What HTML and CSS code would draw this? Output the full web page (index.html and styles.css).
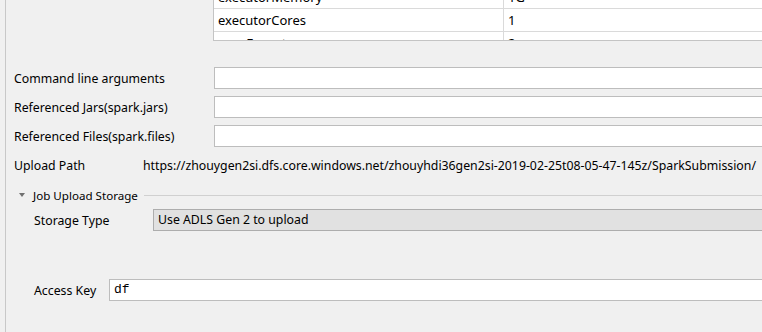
FILE: index.html
```html
<!DOCTYPE html>
<html>
<head>
<meta charset="utf-8">
<link rel="stylesheet" href="styles.css">
</head>
<body>
<div class="panel">
  <div class="params">
    <table class="ptable">
      <tr><td class="k">executorMemory</td><td class="v">1G</td></tr>
      <tr><td class="k">executorCores</td><td class="v">1</td></tr>
      <tr><td class="k">numExecutors</td><td class="v">2</td></tr>
    </table>
  </div>
  <div class="form">
    <div class="row"><span class="lbl lbl-main">Command line arguments</span><div class="field"></div></div>
    <div class="row"><span class="lbl lbl-main">Referenced Jars(spark.jars)</span><div class="field"></div></div>
    <div class="row"><span class="lbl lbl-main">Referenced Files(spark.files)</span><div class="field"></div></div>
    <div class="row row-upload"><span class="lbl lbl-upload">Upload Path</span><span class="url">https://zhouygen2si.dfs.core.windows.net/zhouyhdi36gen2si-2019-02-25t08-05-47-145z/SparkSubmission/</span></div>
    <div class="group">
      <div class="group-title"><span class="tri"></span><span class="gt-text">Job Upload Storage</span><span class="sep"></span></div>
      <div class="row"><span class="lbl lbl-type">Storage Type</span><div class="combo">Use ADLS Gen 2 to upload</div></div>
      <div class="row row-key"><span class="lbl lbl-key">Access Key</span><div class="field mono">df</div></div>
    </div>
  </div>
</div>
</body>
</html>
```
FILE: styles.css
```css
html, body {
  margin: 0;
  padding: 0;
  background: #f0f0f0;
  overflow: hidden;
  width: 762px;
  height: 332px;
}
body {
  font-family: "Noto Sans", "Open Sans", sans-serif;
  font-size: 12.3px;
  color: #000;
}
.panel {
  margin-left: 5px;
  border-left: 1px solid #c8c8c8;
  height: 332px;
  width: 900px;
}
.params {
  margin-left: 207px;
  height: 40px;
  overflow: hidden;
  border-bottom: 1px solid #c4c4c4;
  border-left: 1px solid #c4c4c4;
  background: #fff;
}
.ptable {
  border-collapse: collapse;
  margin-top: -14px;
  width: 700px;
  font-size: 13px;
}
.ptable td {
  height: 22px;
  padding: 0 0 0 4px;
  border-bottom: 1px solid #dadada;
  line-height: 22px;
  white-space: nowrap;
}
.ptable td.k {
  width: 285px;
  border-right: 1px solid #dadada;
}
.form {
  padding-top: 26px;
}
.row {
  display: flex;
  align-items: center;
  height: 22px;
  margin-bottom: 7px;
}
.lbl {
  flex: none;
  white-space: nowrap;
}
.lbl-main {
  width: 200px;
  padding-left: 8px;
}
.field {
  flex: 1;
  height: 20px;
  background: #fff;
  border: 1px solid #bdbdbd;
  border-right: none;
}
.row-upload {
  margin-top: 5px;
  margin-bottom: 0;
}
.lbl-upload {
  width: 129px;
  padding-left: 8px;
}
.url {
  white-space: nowrap;
}
.group {
  padding-left: 13px;
}
.group-title {
  display: flex;
  align-items: center;
  height: 16px;
  margin-top: 11px;
  font-size: 11.6px;
  margin-bottom: 6px;
}
.tri {
  width: 0;
  height: 0;
  border-left: 3.5px solid transparent;
  border-right: 3.5px solid transparent;
  border-top: 4px solid #707070;
  margin-right: 8px;
}
.sep {
  flex: 1;
  height: 1px;
  background: #d0d0d0;
  margin-left: 6px;
}
.lbl-type {
  width: 119px;
  padding-left: 15px;
}
.combo {
  flex: 1;
  height: 20px;
  line-height: 20px;
  background: #e1e1e1;
  border: 1px solid #adadad;
  border-right: none;
  padding-left: 4px;
}
.row-key {
  margin-top: 48px;
}
.lbl-key {
  width: 75px;
  padding-left: 15px;
}
.mono {
  font-family: "Liberation Mono", "DejaVu Sans Mono", monospace;
  font-size: 13px;
  line-height: 20px;
  padding-left: 4px;
}
```
